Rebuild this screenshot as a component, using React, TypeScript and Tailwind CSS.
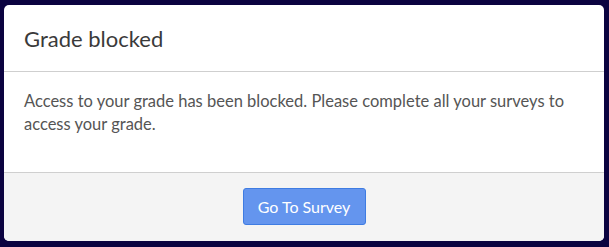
export default function App() {
  return (
    <div className="h-[247px] w-[609px] bg-[#0b0340] pt-[5px] pl-[4px] pr-[5px] pb-[6px] font-['Lato','Liberation_Sans',sans-serif]">
      <div className="flex h-full w-full flex-col overflow-hidden rounded-[5px] bg-white">
        <div className="flex h-[67px] items-center border-b border-[#cfcfcf] px-[20px]">
          <h1 className="text-[22px] font-normal text-[#3a3a3a]">Grade blocked</h1>
        </div>
        <div className="h-[101px] border-b border-[#cfcfcf] pl-[20px] pr-[20px] pt-[18px]">
          <p className="text-[16.5px] leading-[23px] text-[#555555]">
            Access to your grade has been blocked. Please complete all your surveys to access your grade.
          </p>
        </div>
        <div className="flex flex-1 items-start justify-center bg-[#f4f4f4] pt-[15px]">
          <button className="h-[37px] w-[123px] rounded-[3px] border border-[#3f7ce2] bg-[#6495ee] text-[16px] text-white">
            Go To Survey
          </button>
        </div>
      </div>
    </div>
  )
}
